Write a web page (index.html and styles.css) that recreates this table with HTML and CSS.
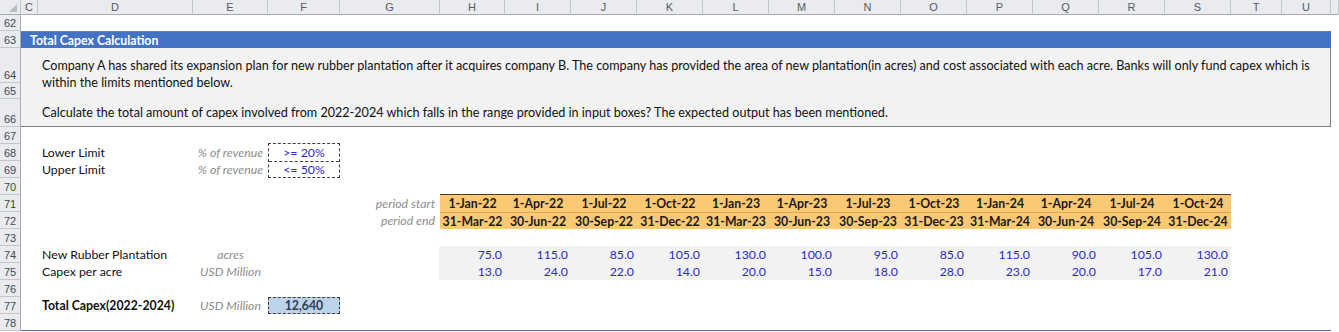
FILE: index.html
```html
<!DOCTYPE html>
<html>
<head>
<meta charset="utf-8">
<link rel="stylesheet" href="styles.css">
</head>
<body>
<div class="sheet">
  <div class="corner"><span class="tri"></span></div>
  <div class="ch">C</div>
  <div class="ch">D</div>
  <div class="ch">E</div>
  <div class="ch">F</div>
  <div class="ch">G</div>
  <div class="ch">H</div>
  <div class="ch">I</div>
  <div class="ch">J</div>
  <div class="ch">K</div>
  <div class="ch">L</div>
  <div class="ch">M</div>
  <div class="ch">N</div>
  <div class="ch">O</div>
  <div class="ch">P</div>
  <div class="ch">Q</div>
  <div class="ch">R</div>
  <div class="ch">S</div>
  <div class="ch">T</div>
  <div class="ch">U</div>
  <div class="ch"></div>

  <div class="rh r2">62</div>
  <div class="rh r3">63</div>
  <div class="rh r4">64</div>
  <div class="rh r5">65</div>
  <div class="rh r6">66</div>
  <div class="rh r7">67</div>
  <div class="rh r8">68</div>
  <div class="rh r9">69</div>
  <div class="rh r10">70</div>
  <div class="rh r11">71</div>
  <div class="rh r12">72</div>
  <div class="rh r13">73</div>
  <div class="rh r14">74</div>
  <div class="rh r15">75</div>
  <div class="rh r16">76</div>
  <div class="rh r17">77</div>
  <div class="rh r18">78</div>

  <div class="title">Total Capex Calculation</div>

  <div class="desc">
    <p class="para">Company A has shared its expansion plan for new rubber plantation after it acquires company B. The company has provided the area of new plantation(in acres) and cost associated with each acre. Banks will only fund capex which is<br>within the limits mentioned below.</p>
    <p class="para">Calculate the total amount of capex involved from 2022-2024 which falls in the range provided in input boxes? The expected output has been mentioned.</p>
  </div>

  <div class="lbl r8">Lower Limit</div>
  <div class="unit r8">% of revenue</div>
  <div class="lbl r9">Upper Limit</div>
  <div class="unit r9">% of revenue</div>
  <div class="inputs">
    <div class="inp">&gt;= 20%</div>
    <div class="inp">&lt;= 50%</div>
  </div>

  <div class="plabel r11">period start</div>
  <div class="plabel r12">period end</div>
  <div class="periods">
    <div class="pc">1-Jan-22</div><div class="pc">1-Apr-22</div><div class="pc">1-Jul-22</div><div class="pc">1-Oct-22</div>
    <div class="pc">1-Jan-23</div><div class="pc">1-Apr-23</div><div class="pc">1-Jul-23</div><div class="pc">1-Oct-23</div>
    <div class="pc">1-Jan-24</div><div class="pc">1-Apr-24</div><div class="pc">1-Jul-24</div><div class="pc">1-Oct-24</div>
    <div class="pc pe">31-Mar-22</div><div class="pc pe">30-Jun-22</div><div class="pc pe">30-Sep-22</div><div class="pc pe">31-Dec-22</div>
    <div class="pc pe">31-Mar-23</div><div class="pc pe">30-Jun-23</div><div class="pc pe">30-Sep-23</div><div class="pc pe">31-Dec-23</div>
    <div class="pc pe">31-Mar-24</div><div class="pc pe">30-Jun-24</div><div class="pc pe">30-Sep-24</div><div class="pc pe">31-Dec-24</div>
  </div>

  <div class="lbl r14">New Rubber Plantation</div>
  <div class="unit r14">acres</div>
  <div class="lbl r15">Capex per acre</div>
  <div class="unit r15">USD Million</div>
  <div class="data">
    <div class="dc">75.0</div><div class="dc">115.0</div><div class="dc">85.0</div><div class="dc">105.0</div>
    <div class="dc">130.0</div><div class="dc">100.0</div><div class="dc">95.0</div><div class="dc">85.0</div>
    <div class="dc">115.0</div><div class="dc">90.0</div><div class="dc">105.0</div><div class="dc">130.0</div>
    <div class="dc">13.0</div><div class="dc">24.0</div><div class="dc">22.0</div><div class="dc">14.0</div>
    <div class="dc">20.0</div><div class="dc">15.0</div><div class="dc">18.0</div><div class="dc">28.0</div>
    <div class="dc">23.0</div><div class="dc">20.0</div><div class="dc">17.0</div><div class="dc">21.0</div>
  </div>

  <div class="lbl bold r17">Total Capex(2022-2024)</div>
  <div class="unit r17">USD Million</div>
  <div class="total">12,640</div>

  <div class="sheet-end"></div>
</div>
</body>
</html>
```

FILE: styles.css
```css
html, body {
  margin: 0;
  padding: 0;
  background: #ffffff;
}

.sheet {
  display: grid;
  grid-template-columns: 21px 17px 155px 75px 72px 100px 65px repeat(11, 66px) 51px 49px 1fr;
  grid-template-rows: 15px 16px 17px 35px 16px 28px repeat(12, 17px);
  font-family: "Lato", "Liberation Sans", sans-serif;
  font-size: 12.3px;
  color: #111;
}

.corner {
  grid-row: 1;
  grid-column: 1;
  background: #e9ebee;
  border-right: 1px solid #c3c7cc;
  border-bottom: 1px solid #a9adb3;
  position: relative;
}
.tri {
  position: absolute;
  right: 3px;
  bottom: 2px;
  width: 0;
  height: 0;
  border-left: 8px solid transparent;
  border-bottom: 8px solid #b9bcc0;
}

.ch {
  grid-row: 1;
  background: #e9ebee;
  border-right: 1px solid #c3c7cc;
  border-bottom: 1px solid #a9adb3;
  font-family: "Liberation Sans", sans-serif;
  font-size: 11px;
  color: #555a60;
  display: flex;
  align-items: center;
  justify-content: center;
}

.rh {
  grid-column: 1;
  background: #e9ebee;
  border-right: 1px solid #a9adb3;
  border-bottom: 1px solid #c3c7cc;
  font-family: "Liberation Sans", sans-serif;
  font-size: 11px;
  color: #444a50;
  display: flex;
  align-items: flex-end;
  justify-content: center;
  padding-bottom: 1px;
  box-sizing: border-box;
}

.r2 { grid-row: 2; }
.r3 { grid-row: 3; }
.r4 { grid-row: 4; }
.r5 { grid-row: 5; }
.r6 { grid-row: 6; }
.r7 { grid-row: 7; }
.r8 { grid-row: 8; }
.r9 { grid-row: 9; }
.r10 { grid-row: 10; }
.r11 { grid-row: 11; }
.r12 { grid-row: 12; }
.r13 { grid-row: 13; }
.r14 { grid-row: 14; }
.r15 { grid-row: 15; }
.r16 { grid-row: 16; }
.r17 { grid-row: 17; }
.r18 { grid-row: 18; }

.title {
  grid-row: 3;
  grid-column: 2 / 21;
  background: #4472c4;
  border-top: 1px solid #6b7b98;
  color: #ffffff;
  font-weight: 700;
  padding-left: 9px;
  display: flex;
  align-items: center;
  box-sizing: border-box;
}

.desc {
  grid-row: 4 / 7;
  grid-column: 2 / 21;
  background: #f2f2f2;
  border-right: 1px solid #808080;
  border-bottom: 1px solid #808080;
  display: grid;
  grid-template-rows: 51px 1fr;
}
.para {
  margin: 0;
  padding-left: 21px;
  font-size: 12.6px;
  line-height: 17px;
  white-space: nowrap;
  align-self: center;
}

.lbl {
  grid-column: 3;
  padding-left: 4px;
  display: flex;
  align-items: center;
  white-space: nowrap;
}
.bold { font-weight: 700; }

.unit {
  grid-column: 4;
  font-style: italic;
  color: #8c8c8c;
  display: flex;
  align-items: center;
  justify-content: center;
  white-space: nowrap;
}

.inputs {
  grid-column: 5;
  grid-row: 8 / 10;
  border: 1px dashed #3c3c3c;
  display: grid;
  grid-template-rows: 1fr 1fr;
  margin: -1px 0 0 0;
}
.inp {
  display: flex;
  align-items: center;
  justify-content: center;
  color: #2a2acb;
}
.inp + .inp {
  border-top: 1px dashed #3c3c3c;
}

.plabel {
  grid-column: 6;
  font-style: italic;
  color: #8c8c8c;
  display: flex;
  align-items: center;
  justify-content: flex-end;
  padding-right: 5px;
}

.periods {
  grid-row: 11 / 13;
  grid-column: 7 / 19;
  background: #fbc874;
  border-top: 1px solid #4a3a20;
  margin-top: -1px;
  display: grid;
  grid-template-columns: 65px repeat(11, 66px);
  grid-template-rows: 1fr 1fr;
}
.pc {
  font-weight: 700;
  color: #1a1a1a;
  display: flex;
  align-items: center;
  justify-content: center;
  white-space: nowrap;
}
.pe {
  border-top: 1px solid #e0a850;
}

.data {
  grid-row: 14 / 16;
  grid-column: 7 / 19;
  background: #f2f2f2;
  margin-left: -1px;
  display: grid;
  grid-template-columns: 66px repeat(11, 66px);
  grid-template-rows: 1fr 1fr;
}
.dc {
  color: #2a2acb;
  display: flex;
  align-items: center;
  justify-content: flex-end;
  padding-right: 3px;
}

.total {
  grid-row: 17;
  grid-column: 5;
  background: #bcd3ea;
  border: 1px dashed #3c3c3c;
  font-weight: 700;
  color: #2f3c50;
  display: flex;
  align-items: center;
  justify-content: center;
}

.sheet-end {
  grid-row: 18;
  grid-column: 2 / 21;
  align-self: end;
  height: 2px;
  margin-bottom: -1px;
  background: #5a6c95;
}
```
